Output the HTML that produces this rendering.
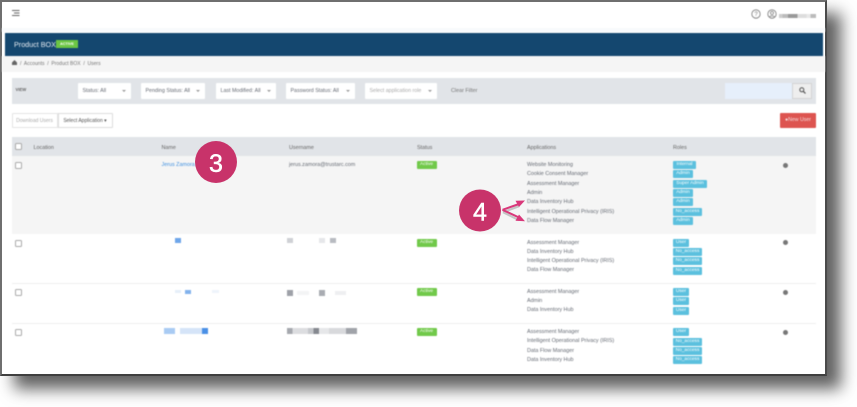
<!DOCTYPE html>
<html><head><meta charset="utf-8">
<style>
html,body{margin:0;padding:0;background:#fff;width:857px;height:407px;overflow:hidden}
*{box-sizing:border-box}
body{font-family:"Liberation Sans",sans-serif;position:relative}
.win{position:absolute;left:0;top:0;width:827px;height:376px;background:#fff;border:solid #6f6f6f;border-width:2px;border-right-color:#4a4a4a;border-bottom-color:#3f3f3f;box-shadow:14px 13px 15px rgba(0,0,0,.62)}
.c{position:absolute;left:0;top:0;width:857px;height:407px;filter:blur(.42px)}
.a{position:absolute;white-space:nowrap;line-height:8px;height:8px;font-size:5.4px;color:#666b74;margin-top:.5px}
.b{position:absolute}
.sel{position:absolute;top:83px;height:16px;background:#fff;border-radius:1px;font-size:5.3px;line-height:16.500px;color:#666b74;padding-left:4.500px;white-space:nowrap}
.sel:after{content:"";position:absolute;right:5px;top:7px;border:2px solid transparent;border-top:2px solid #999;border-bottom:0}
.cb{position:absolute;left:15px;width:7px;height:7px;border:1px solid #aaa;border-radius:1.500px;background:#fff}
.g{position:absolute;left:417px;width:20px;height:8px;background:#71c94a;color:#fff;font-size:4.800px;line-height:8px;padding-left:3px;border-radius:1px}
.r{position:absolute;left:673px;height:8px;background:#5bc0de;color:#fff;font-size:4.800px;line-height:8px;text-align:center;border-radius:1px}
.gear{position:absolute;left:782.500px;width:5px;height:5px;border-radius:50%;background:#777}
.bl{position:absolute;height:4px}
</style></head><body>
<div class="win"></div>
<div class="c">
<!-- top bar -->
<svg class="b" style="left:11px;top:9px" width="10" height="9"><path d="M1 1.500H8.500M3 4H8.500M1 6.500H8.500" stroke="#666" stroke-width="1" fill="none"/></svg>
<svg class="b" style="left:750px;top:8px" width="12" height="12"><circle cx="6" cy="6" r="4.200" stroke="#777" stroke-width=".8" fill="none"/><text x="6" y="8" font-size="6" font-family="Liberation Sans" fill="#777" text-anchor="middle">?</text></svg>
<svg class="b" style="left:766px;top:8px" width="12" height="12"><circle cx="6" cy="6" r="4.200" stroke="#777" stroke-width=".8" fill="none"/><circle cx="6" cy="5" r="1.500" stroke="#777" stroke-width=".7" fill="none"/><path d="M3.500 9C4 7.500 8 7.500 8.500 9" stroke="#777" stroke-width=".7" fill="none"/></svg>
<div class="b" style="left:779px;top:14px;width:37px;height:4px;background:linear-gradient(90deg,#ccc 0 10%,#bbb 10% 25%,#999 25% 50%,#ddd 50% 75%,#e8e8e8 75% 85%,#bbb 85%)"></div>
<div class="b" style="left:2px;top:28px;width:823px;height:4px;background:#f8fafc"></div>
<!-- header -->
<div class="b" style="left:4.500px;top:32.500px;width:818.500px;height:23px;background:#14476f"></div>
<div class="a" style="left:14px;top:40px;font-size:7.200px;color:#e6ecf2">Product BOX</div>
<div class="b" style="left:56px;top:40px;width:22px;height:8px;background:#6cc644;color:#fff;font-size:3.800px;font-weight:bold;line-height:8px;text-align:center">ACTIVE</div>
<!-- breadcrumb -->
<div class="b" style="left:2px;top:55.500px;width:823px;height:16.500px;background:#f5f5f5"></div>
<svg class="b" style="left:12px;top:60px" width="5" height="5"><path d="M0 2.500L2.500 0L5 2.500V5H0Z" fill="#666"/></svg>
<div class="a" style="left:20px;top:59px;font-size:5px;color:#777">/&nbsp; Accounts&nbsp; /&nbsp; Product BOX&nbsp; /&nbsp; Users</div>
<!-- filter -->
<div class="b" style="left:12px;top:78px;width:804px;height:26px;background:#e1e4e8"></div>
<div class="a" style="left:15.500px;top:85px;font-size:4.200px;font-weight:bold;color:#666">VIEW</div>
<div class="sel" style="left:78px;width:53px">Status: All</div>
<div class="sel" style="left:141px;width:64px">Pending Status: All</div>
<div class="sel" style="left:216px;width:60px">Last Modified: All</div>
<div class="sel" style="left:286px;width:69px">Password Status: All</div>
<div class="sel" style="left:365px;width:72px;color:#aaa">Select application role</div>
<div class="a" style="left:451px;top:86.500px;color:#777">Clear Filter</div>
<div class="b" style="left:725px;top:83px;width:67px;height:16px;background:#e6effb"></div>
<div class="b" style="left:792px;top:83px;width:20px;height:16px;background:#eee;border:.5px solid #d4d4d4"></div>
<svg class="b" style="left:798px;top:86px" width="9" height="9"><circle cx="3.800" cy="3.800" r="2" stroke="#555" stroke-width="1" fill="none"/><path d="M5.300 5.300L7.500 7.500" stroke="#555" stroke-width="1.200"/></svg>
<!-- actions -->
<div class="b" style="left:11.500px;top:113px;width:46px;height:14.500px;border:.5px solid #e4e4e4;border-radius:1px 0 0 1px;font-size:5px;line-height:14px;color:#aaa;text-align:center">Download Users</div>
<div class="b" style="left:57.500px;top:113px;width:55px;height:14.500px;border:.5px solid #ddd;border-radius:0 1px 1px 0;font-size:5px;line-height:14px;color:#555;text-align:center">Select Application &#9662;</div>
<div class="b" style="left:780px;top:113px;width:36px;height:14.500px;background:#dd5450;border-radius:1px;font-size:5.200px;line-height:14.500px;color:#f5dcdc;text-align:center">&#9679;New User</div>
<!-- table -->
<div class="b" style="left:12px;top:137px;width:804px;height:19px;background:#e1e4e8"></div>
<div class="b" style="left:12px;top:156px;width:804px;height:78px;background:#f5f5f5"></div>
<div class="b" style="left:12px;top:283px;width:804px;height:.6px;background:#eee"></div>
<div class="b" style="left:12px;top:323px;width:804px;height:.6px;background:#eee"></div>
<div class="cb" style="top:143px"></div><div class="cb" style="top:162px"></div><div class="cb" style="top:239.500px"></div><div class="cb" style="top:288.500px"></div><div class="cb" style="top:328.500px"></div>
<div class="a" style="left:33.500px;top:143px;color:#666">Location</div>
<div class="a" style="left:161.500px;top:143px;color:#666">Name</div>
<div class="a" style="left:289px;top:143px;color:#666">Username</div>
<div class="a" style="left:417px;top:143px;color:#666">Status</div>
<div class="a" style="left:527px;top:143px;color:#666">Applications</div>
<div class="a" style="left:673px;top:143px;color:#666">Roles</div>

<div class="a" style="left:161.500px;top:160px;color:#3d8fe0">Jerus Zamora</div>
<div class="a" style="left:289px;top:160px">jerus.zamora@trustarc.com</div>
<div class="bl" style="left:175px;top:238px;width:6px;height:5px;background:#6ea6ea"></div>
<div class="bl" style="left:287px;top:238px;width:6px;height:5px;background:#cfd1d5"></div>
<div class="bl" style="left:319px;top:238px;width:6px;height:5px;background:#e6e7ea"></div>
<div class="bl" style="left:330px;top:238px;width:6px;height:5px;background:#b8bbc1"></div>
<div class="bl" style="left:175px;top:290px;width:6px;height:3px;background:#e6eff9"></div>
<div class="bl" style="left:185px;top:290px;width:6px;height:3.500px;background:#82b2ec"></div>
<div class="bl" style="left:212px;top:290px;width:7px;height:3px;background:#eef4fb"></div>
<div class="bl" style="left:287px;top:290px;width:6px;height:6px;background:#9ea1a8"></div>
<div class="bl" style="left:297px;top:291px;width:12px;height:4px;background:#f3f4f5"></div>
<div class="bl" style="left:319px;top:290px;width:6px;height:6px;background:#a9acb2"></div>
<div class="bl" style="left:335px;top:291px;width:11px;height:4px;background:#eeeff1"></div>
<div class="bl" style="left:164px;top:328px;width:11px;height:5.500px;background:#a9cbf3"></div>
<div class="bl" style="left:180px;top:328px;width:22px;height:5.500px;background:#d5e4f8"></div>
<div class="bl" style="left:202px;top:328px;width:5.500px;height:5.500px;background:#4a90e6"></div>
<div class="bl" style="left:287px;top:328px;width:70px;height:5.500px;background:linear-gradient(90deg,#a5a8ae 0 8%,#dcdde0 8% 30%,#c5c7cb 30% 38%,#85888f 38% 46%,#e6e7e9 46% 60%,#d8d9dc 60% 84%,#a0a3a9 84%)"></div>

<div class="g" style="top:161px">Active</div>
<div class="g" style="top:238.500px">Active</div>
<div class="g" style="top:287.500px">Active</div>
<div class="g" style="top:327.500px">Active</div>

<div class="a" style="left:527px;top:160px">Website Monitoring</div>
<div class="a" style="left:527px;top:169.500px">Cookie Consent Manager</div>
<div class="a" style="left:527px;top:179px">Assessment Manager</div>
<div class="a" style="left:527px;top:188px">Admin</div>
<div class="a" style="left:527px;top:197.500px">Data Inventory Hub</div>
<div class="a" style="left:527px;top:207px">Intelligent Operational Privacy (IRIS)</div>
<div class="a" style="left:527px;top:216px">Data Flow Manager</div>

<div class="a" style="left:527px;top:238px">Assessment Manager</div>
<div class="a" style="left:527px;top:247px">Data Inventory Hub</div>
<div class="a" style="left:527px;top:256.500px">Intelligent Operational Privacy (IRIS)</div>
<div class="a" style="left:527px;top:265.500px">Data Flow Manager</div>

<div class="a" style="left:527px;top:287px">Assessment Manager</div>
<div class="a" style="left:527px;top:296px">Admin</div>
<div class="a" style="left:527px;top:305.500px">Data Inventory Hub</div>

<div class="a" style="left:527px;top:327px">Assessment Manager</div>
<div class="a" style="left:527px;top:336.500px">Intelligent Operational Privacy (IRIS)</div>
<div class="a" style="left:527px;top:346px">Data Flow Manager</div>
<div class="a" style="left:527px;top:355px">Data Inventory Hub</div>

<div class="r" style="top:161px;width:23px">Internal</div>
<div class="r" style="top:170px;width:20px">Admin</div>
<div class="r" style="top:179.500px;width:34px">Super Admin</div>
<div class="r" style="top:189px;width:20px">Admin</div>
<div class="r" style="top:198px;width:20px">Admin</div>
<div class="r" style="top:207.500px;width:29px">No_access</div>
<div class="r" style="top:217px;width:20px">Admin</div>

<div class="r" style="top:238.500px;width:16px">User</div>
<div class="r" style="top:248px;width:29px">No_access</div>
<div class="r" style="top:257px;width:29px">No_access</div>
<div class="r" style="top:266.500px;width:29px">No_access</div>

<div class="r" style="top:288px;width:16px">User</div>
<div class="r" style="top:297px;width:16px">User</div>
<div class="r" style="top:306.500px;width:16px">User</div>

<div class="r" style="top:328px;width:16px">User</div>
<div class="r" style="top:337.500px;width:29px">No_access</div>
<div class="r" style="top:346.500px;width:29px">No_access</div>
<div class="r" style="top:356px;width:29px">No_access</div>

<div class="gear" style="top:162.500px"></div>
<div class="gear" style="top:240px"></div>
<div class="gear" style="top:289.500px"></div>
<div class="gear" style="top:329.500px"></div>
</div>
<!-- callouts -->
<svg class="b" style="left:0;top:0;filter:blur(.25px)" width="857" height="407">
<path d="M503 211L519 205M503 211L519 219" stroke="#000" stroke-opacity=".2" stroke-width="2.200" fill="none" transform="translate(0 1.200)"/>
<path d="M502.500 209.800L519 204" stroke="#d9387a" stroke-width="2" fill="none"/>
<path d="M502.500 209.800L519 217.500" stroke="#d9387a" stroke-width="2" fill="none"/>
<path d="M525 200.500L515.500 200.800L519 207Z" fill="#d9387a"/>
<path d="M525 221.300L519 214.500L515.500 220.800Z" fill="#d9387a"/>
<circle cx="216" cy="162" r="21" fill="#c8336a"/>
<circle cx="480" cy="210.500" r="21" fill="#c8336a"/>
<text x="216" y="172" font-family="Liberation Sans" font-size="25" fill="#fff" stroke="#fff" stroke-width=".5" text-anchor="middle">3</text>
<text x="480" y="220.500" font-family="Liberation Sans" font-size="25" fill="#fff" stroke="#fff" stroke-width=".5" text-anchor="middle">4</text>
</svg>
</body></html>
